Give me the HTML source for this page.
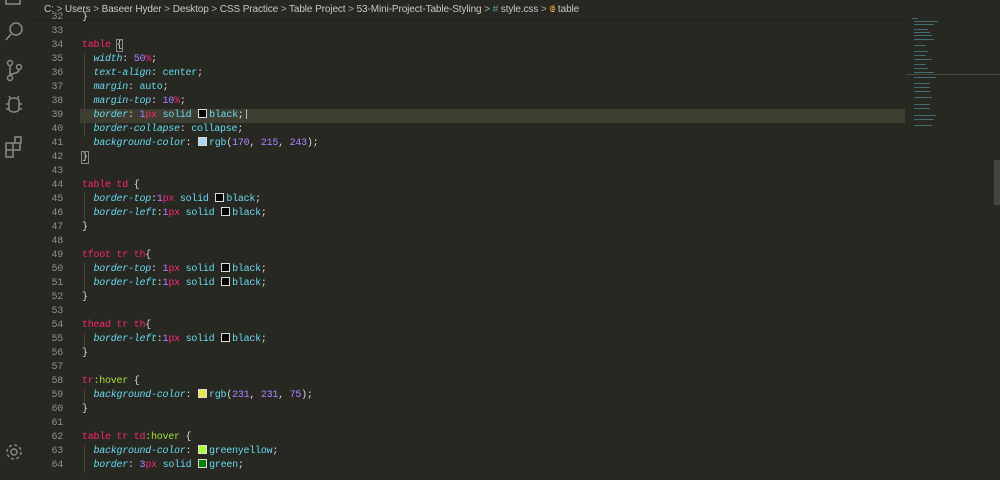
<!DOCTYPE html>
<html><head><style>
body{margin:0;width:1000px;height:475px;background:#272822;overflow:hidden;position:relative;font-family:"Liberation Sans",sans-serif}
.act{position:absolute;left:0;top:0;width:30px;height:475px;background:#272822}
.bc{position:absolute;left:44px;top:4px;font-size:10px;color:#c8c8c0;white-space:pre;letter-spacing:-0.1px}
.bc .s{color:#aaa}
.code{position:absolute;left:0;top:11px;width:905px;font-family:"Liberation Mono",monospace;font-size:10px;letter-spacing:-0.25px}
.ln{position:absolute;left:0;height:14px;line-height:14px;width:100%;white-space:pre;color:#d8d8d0}
.ln .n{position:absolute;left:36px;width:27px;text-align:right;color:#8f908a}
.ln .c{position:absolute;left:82px}
.hl{background:#3e3d32}
.k{color:#f92672}.p{color:#66d9ef;font-style:italic}.v{color:#66d9ef}.m{color:#ae81ff}.u{color:#f92672}.g{color:#a6e22e}
.sw{display:inline-block;width:7px;height:7px;border:1px solid #ddd;margin:0 2px 0 1px;vertical-align:-1px}
.ind{position:absolute;left:84px;width:1px;background:#464741}
</style></head><body>
<div class="act">
<svg width="30" height="475" fill="none" stroke="#8a8a85" stroke-width="1.5">
<rect x="6" y="-6" width="14" height="10"/>
<circle cx="16" cy="29" r="6"/><line x1="11" y1="34" x2="6" y2="40"/>
<circle cx="10" cy="63" r="2.5"/><circle cx="10" cy="78" r="2.5"/><circle cx="19" cy="67" r="2.5"/><path d="M10 66v9M19 70c0 4-9 3-9 6"/>
<path d="M9 101c0-4 10-4 10 0v8c0 4-10 4-10 0zM6 104h3M19 104h3M6 109h3M19 109h3M11 99l-2-3M17 99l2-3"/>
<path d="M6 143h7v7H6zM13 143h7v7h-7zM6 150h7v7H6zM15 137h6v6h-6z"/>
<circle cx="14" cy="452" r="3"/><circle cx="14" cy="452" r="7" stroke-dasharray="3 2.5"/>
</svg></div>
<div class="bc">C: <span class="s">&gt;</span> Users <span class="s">&gt;</span> Baseer Hyder <span class="s">&gt;</span> Desktop <span class="s">&gt;</span> CSS Practice <span class="s">&gt;</span> Table Project <span class="s">&gt;</span> 53-Mini-Project-Table-Styling <span class="s">&gt;</span> <span style="color:#519aba">#</span> style.css <span class="s">&gt;</span> <span style="color:#e8a33c">⟃</span> table</div>
<div style="position:absolute;left:30px;top:20px;width:876px;height:1px;background:#1e1f1a"></div>
<div class="code">
<div class="ind" style="top:42px;height:84px"></div>
<div class="ind" style="top:182px;height:28px"></div>
<div class="ind" style="top:252px;height:28px"></div>
<div class="ind" style="top:322px;height:14px"></div>
<div class="ind" style="top:378px;height:14px"></div>
<div class="ind" style="top:434px;height:28px"></div>
<div class="ln" style="top:0px"><span class="n">32</span><span class="c">}</span></div>
<div class="ln" style="top:14px"><span class="n">33</span></div>
<div class="ln" style="top:28px"><span class="n">34</span><span class="c"><span class="k">table</span> <span style="outline:1px solid #888">{</span></span></div>
<div class="ln" style="top:42px"><span class="n">35</span><span class="c">  <span class="p">width</span>: <span class="m">50</span><span class="u">%</span>;</span></div>
<div class="ln" style="top:56px"><span class="n">36</span><span class="c">  <span class="p">text-align</span>: <span class="v">center</span>;</span></div>
<div class="ln" style="top:70px"><span class="n">37</span><span class="c">  <span class="p">margin</span>: <span class="v">auto</span>;</span></div>
<div class="ln" style="top:84px"><span class="n">38</span><span class="c">  <span class="p">margin-top</span>: <span class="m">10</span><span class="u">%</span>;</span></div>
<div class="ln" style="top:98px"><div style="position:absolute;left:80px;width:825px;height:14px" class="hl"></div><span class="n">39</span><span class="c">  <span class="p">border</span>: <span class="m">1</span><span class="u">px</span> <span class="v">solid</span> <span class="sw" style="background:#000"></span><span class="v">black</span>;|</span></div>
<div class="ln" style="top:112px"><span class="n">40</span><span class="c">  <span class="p">border-collapse</span>: <span class="v">collapse</span>;</span></div>
<div class="ln" style="top:126px"><span class="n">41</span><span class="c">  <span class="p">background-color</span>: <span class="sw" style="background:rgb(170,215,243)"></span><span class="v">rgb</span>(<span class="m">170</span>, <span class="m">215</span>, <span class="m">243</span>);</span></div>
<div class="ln" style="top:140px"><span class="n">42</span><span class="c"><span style="outline:1px solid #888">}</span></span></div>
<div class="ln" style="top:154px"><span class="n">43</span></div>
<div class="ln" style="top:168px"><span class="n">44</span><span class="c"><span class="k">table td</span> {</span></div>
<div class="ln" style="top:182px"><span class="n">45</span><span class="c">  <span class="p">border-top</span>:<span class="m">1</span><span class="u">px</span> <span class="v">solid</span> <span class="sw" style="background:#000"></span><span class="v">black</span>;</span></div>
<div class="ln" style="top:196px"><span class="n">46</span><span class="c">  <span class="p">border-left</span>:<span class="m">1</span><span class="u">px</span> <span class="v">solid</span> <span class="sw" style="background:#000"></span><span class="v">black</span>;</span></div>
<div class="ln" style="top:210px"><span class="n">47</span><span class="c">}</span></div>
<div class="ln" style="top:224px"><span class="n">48</span></div>
<div class="ln" style="top:238px"><span class="n">49</span><span class="c"><span class="k">tfoot tr th</span>{</span></div>
<div class="ln" style="top:252px"><span class="n">50</span><span class="c">  <span class="p">border-top</span>: <span class="m">1</span><span class="u">px</span> <span class="v">solid</span> <span class="sw" style="background:#000"></span><span class="v">black</span>;</span></div>
<div class="ln" style="top:266px"><span class="n">51</span><span class="c">  <span class="p">border-left</span>:<span class="m">1</span><span class="u">px</span> <span class="v">solid</span> <span class="sw" style="background:#000"></span><span class="v">black</span>;</span></div>
<div class="ln" style="top:280px"><span class="n">52</span><span class="c">}</span></div>
<div class="ln" style="top:294px"><span class="n">53</span></div>
<div class="ln" style="top:308px"><span class="n">54</span><span class="c"><span class="k">thead tr th</span>{</span></div>
<div class="ln" style="top:322px"><span class="n">55</span><span class="c">  <span class="p">border-left</span>:<span class="m">1</span><span class="u">px</span> <span class="v">solid</span> <span class="sw" style="background:#000"></span><span class="v">black</span>;</span></div>
<div class="ln" style="top:336px"><span class="n">56</span><span class="c">}</span></div>
<div class="ln" style="top:350px"><span class="n">57</span></div>
<div class="ln" style="top:364px"><span class="n">58</span><span class="c"><span class="k">tr</span><span class="g">:hover</span> {</span></div>
<div class="ln" style="top:378px"><span class="n">59</span><span class="c">  <span class="p">background-color</span>: <span class="sw" style="background:rgb(231,231,75)"></span><span class="v">rgb</span>(<span class="m">231</span>, <span class="m">231</span>, <span class="m">75</span>);</span></div>
<div class="ln" style="top:392px"><span class="n">60</span><span class="c">}</span></div>
<div class="ln" style="top:406px"><span class="n">61</span></div>
<div class="ln" style="top:420px"><span class="n">62</span><span class="c"><span class="k">table tr td</span><span class="g">:hover</span> {</span></div>
<div class="ln" style="top:434px"><span class="n">63</span><span class="c">  <span class="p">background-color</span>: <span class="sw" style="background:greenyellow"></span><span class="v">greenyellow</span>;</span></div>
<div class="ln" style="top:448px"><span class="n">64</span><span class="c">  <span class="p">border</span>: <span class="m">3</span><span class="u">px</span> <span class="v">solid</span> <span class="sw" style="background:green"></span><span class="v">green</span>;</span></div>
</div>
<svg style="position:absolute;left:906px;top:15px" width="94" height="460">
<g fill="#4a7f8a" opacity=".8">
<rect x="6" y="3" width="6" height="1"/><rect x="8" y="6" width="24" height="1"/><rect x="8" y="9" width="20" height="1"/>
<rect x="8" y="14" width="14" height="1"/><rect x="8" y="17" width="16" height="1"/><rect x="8" y="20" width="18" height="1"/><rect x="8" y="24" width="20" height="1"/>
<rect x="8" y="30" width="12" height="1"/><rect x="8" y="36" width="14" height="1"/><rect x="8" y="40" width="12" height="1"/><rect x="8" y="44" width="18" height="1"/>
<rect x="8" y="49" width="12" height="1"/><rect x="8" y="53" width="14" height="1"/><rect x="8" y="57" width="20" height="1"/><rect x="8" y="62" width="22" height="1"/>
<rect x="8" y="68" width="16" height="1"/><rect x="8" y="72" width="16" height="1"/><rect x="8" y="76" width="16" height="1"/><rect x="8" y="82" width="18" height="1"/>
<rect x="8" y="89" width="16" height="1"/><rect x="8" y="93" width="16" height="1"/><rect x="8" y="100" width="22" height="1"/><rect x="8" y="104" width="20" height="1"/><rect x="8" y="110" width="18" height="1"/>
</g>
<rect x="0" y="59" width="94" height="1" fill="#45463f"/>
<rect x="88" y="145" width="6" height="45" fill="#45463f"/>
</svg>
</body></html>
